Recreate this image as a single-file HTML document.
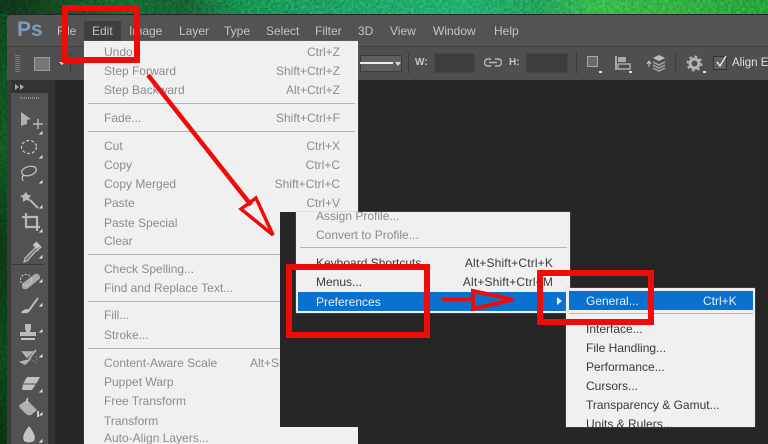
<!DOCTYPE html>
<html><head><meta charset="utf-8"><style>
html,body{margin:0;padding:0;background:#262626}
#r{position:relative;width:768px;height:444px;overflow:hidden;font-family:"Liberation Sans",sans-serif;font-size:12px;background:#262626;filter:blur(.3px)}
.a{position:absolute}
.t{position:absolute;line-height:16px;height:16px;white-space:nowrap}
.m{color:#c4c4c4;font-size:12px;top:23px}
.g{color:#8c8c8c;left:104px}
.k{color:#8c8c8c;right:428px}
.s{position:absolute;height:1px;background:#b4b4b4}
.d{color:#3a3a3a}
.q{letter-spacing:.15px}
</style></head><body><div id="r">
<div class="a" style="left:0;top:0;width:768px;height:15px;background:linear-gradient(90deg,#0b2a12 0,#123f1c 8%,#0f5a2a 16%,#14512a 24%,#127a45 32%,#1a8a55 45%,#1c9a5c 60%,#1c8a4c 70%,#2fa83e 78%,#2a9a38 88%,#1f8a30 100%)"></div>
<div class="a" style="left:0;top:14px;width:7px;height:430px;background:linear-gradient(180deg,#0d3a18,#0f4a1c 30%,#0a2e12 55%,#0c3c16 80%,#082a10)"></div>
<svg class="a" style="left:0;top:0;mix-blend-mode:overlay" width="768" height="444"><filter id="n"><feTurbulence type="fractalNoise" baseFrequency=".35" numOctaves="2" seed="4"/><feColorMatrix values="0 0 0 0 .5 0 0 0 0 .5 0 0 0 0 .5 1.600 0 0 0 -.3"/></filter><rect width="768" height="15" filter="url(#n)"/><rect y="14" width="7" height="430" filter="url(#n)"/></svg>

<div class="a" style="left:7px;top:14px;width:761px;height:430px;background:#262626;border-radius:3px 0 0 0"></div>
<div class="a" style="left:7px;top:15px;width:761px;height:31px;background:#535353;border-radius:3px 0 0 0"></div>
<div class="a" style="left:7px;top:46px;width:761px;height:34px;background:#4f4f4f;border-top:1px solid #3e3e3e;box-sizing:border-box"></div>
<div class="a" style="left:7px;top:80px;width:4px;height:364px;background:#3c3c3c"></div>
<div class="a" style="left:48px;top:80px;width:7px;height:364px;background:#333"></div>
<div class="a" style="left:11px;top:80px;width:37px;height:13px;background:#333"></div>
<div class="a" style="left:11px;top:93px;width:37px;height:351px;background:#525252"></div>

<div class="t" style="left:17px;top:18px;font-size:21px;line-height:24px;height:24px;font-weight:bold;color:#7d9dc0">Ps</div>
<div class="a" style="left:84px;top:21px;width:37px;height:20px;background:#3f3f3f"></div>
<div class="t m" style="left:57px">File</div>
<div class="t m" style="left:92px">Edit</div>
<div class="t m" style="left:129px">Image</div>
<div class="t m" style="left:179px">Layer</div>
<div class="t m" style="left:224px">Type</div>
<div class="t m" style="left:266px">Select</div>
<div class="t m" style="left:315px">Filter</div>
<div class="t m" style="left:358px">3D</div>
<div class="t m" style="left:390px">View</div>
<div class="t m" style="left:433px">Window</div>
<div class="t m" style="left:494px">Help</div>

<!-- options bar -->
<div class="a" style="left:15px;top:55px;width:5px;height:17px;background:repeating-linear-gradient(180deg,#777 0 1px,#4f4f4f 1px 2px)"></div>
<div class="a" style="left:34px;top:57px;width:14px;height:12px;background:#777;border:1px solid #9a9a9a"></div>
<div class="a" style="left:59px;top:62px;border:3px solid transparent;border-top:3px solid #ddd"></div>
<div class="a" style="left:70px;top:53px;width:1px;height:21px;background:#3e3e3e"></div>
<div class="a" style="left:360px;top:55px;width:42px;height:17px;background:#5e5e5e;border:1px solid #3c3c3c;box-sizing:border-box"></div>
<div class="a" style="left:360px;top:62px;width:33px;height:2px;background:#eee"></div>
<div class="a" style="left:395px;top:62px;border:3px solid transparent;border-top:4px solid #ddd"></div>
<div class="a" style="left:408px;top:53px;width:1px;height:21px;background:#3e3e3e"></div>
<div class="t" style="left:415px;top:55px;font-weight:bold;font-size:10px;color:#c8c8c8">W:</div>
<div class="a" style="left:434px;top:53px;width:41px;height:20px;background:#3d3d3d;border:1px solid #454545;box-sizing:border-box"></div>
<svg class="a" style="left:484px;top:56px" width="18" height="14" viewBox="0 0 18 14"><path d="M7 3H4a3.500 3.500 0 0 0 0 7h3M11 3h3a3.500 3.500 0 0 1 0 7h-3M5 6.500h8" fill="none" stroke="#b8b8b8" stroke-width="1.500"/></svg>
<div class="t" style="left:509px;top:55px;font-weight:bold;font-size:10px;color:#c8c8c8">H:</div>
<div class="a" style="left:526px;top:53px;width:42px;height:20px;background:#3d3d3d;border:1px solid #454545;box-sizing:border-box"></div>
<div class="a" style="left:576px;top:52px;width:1px;height:22px;background:#3e3e3e"></div>
<div class="a" style="left:587px;top:56px;width:9px;height:9px;background:#6a6a6a;border:1px solid #a8a8a8"></div>
<div class="a" style="left:599px;top:71px;width:3px;height:2px;background:#ddd"></div>
<svg class="a" style="left:615px;top:55px" width="22" height="18" viewBox="0 0 22 18"><path d="M1 1v14" stroke="#aaa" stroke-width="2"/><rect x="3" y="2" width="8" height="5" fill="#aaa"/><rect x="3" y="9" width="12" height="5" fill="none" stroke="#aaa" stroke-width="1.500"/></svg>
<div class="a" style="left:629px;top:71px;width:3px;height:2px;background:#ddd"></div>
<svg class="a" style="left:645px;top:54px" width="24" height="20" viewBox="0 0 24 20"><path d="M14 1l6 3-6 3-6-3z" fill="#bbb"/><path d="M8 8l6 3 6-3M8 11l6 3 6-3M8 14l6 3 6-3" fill="none" stroke="#a5a5a5" stroke-width="1.500"/><path d="M4 13V8M2 10l2-3 2 3" fill="none" stroke="#ccc"/></svg>
<div class="a" style="left:675px;top:52px;width:1px;height:22px;background:#3e3e3e"></div>
<svg class="a" style="left:686px;top:55px" width="17" height="17" viewBox="0 0 17 17"><circle cx="8.500" cy="8.500" r="4.500" fill="none" stroke="#b5b5b5" stroke-width="3"/><circle cx="8.500" cy="8.500" r="7" fill="none" stroke="#b5b5b5" stroke-width="2" stroke-dasharray="2.500 3"/></svg>
<div class="a" style="left:703px;top:71px;width:3px;height:2px;background:#ddd"></div>
<div class="a" style="left:713px;top:56px;width:12px;height:12px;background:#5e5e5e;border:1px solid #333"></div>
<svg class="a" style="left:714px;top:54px" width="15" height="15" viewBox="0 0 15 15"><path d="M3 8l3 4 6-10" fill="none" stroke="#ddd" stroke-width="1.500"/></svg>
<div class="t" style="left:732px;top:55px;font-size:11.500px;color:#e0e0e0">Align Edges</div>

<!-- toolbar -->
<div class="a" style="left:15px;top:84px;border:3px solid transparent;border-left:4px solid #aaa"></div>
<div class="a" style="left:20px;top:84px;border:3px solid transparent;border-left:4px solid #aaa"></div>
<div class="a" style="left:20px;top:97px;width:19px;height:2px;background:repeating-linear-gradient(90deg,#888 0 1px,#525252 1px 2px)"></div>
<div class="a" style="left:11px;top:264px;width:33px;height:1px;background:#3c3c3c"></div>
<svg class="a" style="left:11px;top:100px" width="37" height="344" viewBox="0 0 37 344" fill="none">
<path d="M10 12l10 7-4 1 0 4-6 2z" fill="#b0b0b0"/><path d="M27 19v10M22 24h10" stroke="#c8c8c8" stroke-width="1.200"/>
<ellipse cx="18" cy="47" rx="7.500" ry="6.500" stroke="#c4c4c4" stroke-width="1.300" stroke-dasharray="3 2"/>
<ellipse cx="18" cy="71" rx="7.500" ry="4.500" stroke="#c0c0c0" stroke-width="1.300" transform="rotate(-15 18 71)"/><path d="M13 75q-3 2-1 6" stroke="#c0c0c0" stroke-width="1.300"/>
<path d="M15 92l2 3 3 0-2 3 1 3-4-1-3 2 0-4-3-2 3-1z" fill="#b8b8b8"/><path d="M19 100l8 8" stroke="#b8b8b8" stroke-width="2"/>
<path d="M11 117h15v14M15 113v14h14" stroke="#b8b8b8" stroke-width="2.200"/>
<path d="M27 144l3 3-4 4-1 0-9 10-3 1 1-4 9-9z" stroke="#bbb" stroke-width="1.200" fill="#777"/><rect x="23" y="143" width="6" height="5" fill="#c4c4c4" transform="rotate(45 26 145)"/>
<g transform="translate(0 7)"><path d="M12 176l12-9q4-1 5 3q0 2-2 3l-11 9q-4 1-5-2q0-2 1-4z" fill="#aaa"/><circle cx="15" cy="173" r="5.500" stroke="#ccc" stroke-dasharray="2 1.500"/></g>
<path d="M27 198l-8 11q-2 2-5 2" stroke="#bbb" stroke-width="2"/><path d="M10 213q2-4 6-4l3 2q-2 3-9 2z" fill="#c0c0c0"/>
<path d="M14 224h6v4l-1 4h6v4H9v-4h6l-1-4z" fill="#bbb"/><rect x="10" y="238" width="14" height="2" fill="#c4c4c4"/>
<path d="M12 252h9l-5 5zM25 250l-7 9M10 262l8-2-4 4z" stroke="#b5b5b5" stroke-width="1.600" fill="#aaa"/><path d="M22 260l4 4M25 256l2 6" stroke="#999" stroke-dasharray="1.500 1.500"/>
<path d="M16 277h13l-4 7-4 6H11l1-6z" fill="#c0c0c0"/><path d="M11 284h14" stroke="#555"/>
<path d="M16 300l10 10-6 5q-3 1-6-2l-5-5q-2-3 1-4z" fill="#b0b0b0"/><path d="M17 298q-2 2 0 5" stroke="#ccc" stroke-width="1.500"/><path d="M27 311v6" stroke="#ccc" stroke-width="2"/>
<path d="M18 326q8 10 5 15q-5 3-10 0q-3-5 5-15z" fill="#c4c4c4"/>
<path d="M29 34l2-2v2zM29 58l2-2v2zM29 83l2-2v2zM29 108l2-2v2zM29 132l2-2v2zM29 158l2-2v2zM29 182l2-2v2zM29 206l2-2v2zM29 232l2-2v2zM29 257l2-2v2zM29 292l2-2v2zM29 315l2-2v2zM29 342l2-2v2z" stroke="#ddd"/>
</svg>

<!-- edit menu -->
<div class="a" style="left:84px;top:41px;width:274px;height:403px;background:#f0f0f0;box-shadow:0 0 1px #777"></div>
<div class="t g" style="top:44px">Undo</div><div class="t k" style="top:44px">Ctrl+Z</div>
<div class="t g" style="top:63px">Step Forward</div><div class="t k" style="top:63px">Shift+Ctrl+Z</div>
<div class="t g" style="top:82px">Step Backward</div><div class="t k" style="top:82px">Alt+Ctrl+Z</div>
<div class="s" style="left:88px;top:103px;width:267px"></div>
<div class="t g" style="top:110px">Fade...</div><div class="t k" style="top:110px">Shift+Ctrl+F</div>
<div class="s" style="left:88px;top:131px;width:267px"></div>
<div class="t g" style="top:138px">Cut</div><div class="t k" style="top:138px">Ctrl+X</div>
<div class="t g" style="top:157px">Copy</div><div class="t k" style="top:157px">Ctrl+C</div>
<div class="t g" style="top:176px">Copy Merged</div><div class="t k" style="top:176px">Shift+Ctrl+C</div>
<div class="t g" style="top:195px">Paste</div><div class="t k" style="top:195px">Ctrl+V</div>
<div class="t g" style="top:215px">Paste Special</div>
<div class="t g" style="top:233px">Clear</div>
<div class="s" style="left:88px;top:254px;width:267px"></div>
<div class="t g" style="top:261px">Check Spelling...</div>
<div class="t g" style="top:280px">Find and Replace Text...</div>
<div class="s" style="left:88px;top:301px;width:267px"></div>
<div class="t g" style="top:307px">Fill...</div>
<div class="t g" style="top:327px">Stroke...</div>
<div class="s" style="left:88px;top:348px;width:267px"></div>
<div class="t g" style="top:355px">Content-Aware Scale</div><div class="t" style="top:355px;left:250px;color:#8c8c8c">Alt+Shift+Ctrl+C</div>
<div class="t g" style="top:374px">Puppet Warp</div>
<div class="t g" style="top:393px">Free Transform</div>
<div class="t g" style="top:413px">Transform</div>
<div class="t g" style="top:430px">Auto-Align Layers...</div>

<!-- dark cover -->
<div class="a" style="left:280px;top:212px;width:488px;height:215px;background:#262626"></div>
<div class="a" style="left:358px;top:427px;width:410px;height:17px;background:#262626"></div>

<!-- submenu 1 -->
<div class="a" style="left:296px;top:212px;width:274px;height:101px;background:#f0f0f0;box-shadow:0 0 1px #999"></div>
<div class="a" style="left:296px;top:212px;width:274px;height:20px;overflow:hidden"><div class="t g" style="left:20px;top:-4px">Assign Profile...</div></div>
<div class="t g" style="left:316px;top:227px">Convert to Profile...</div>
<div class="s" style="left:300px;top:247px;width:267px"></div>
<div class="t d" style="left:316px;top:255px">Keyboard Shortcuts...</div><div class="t d q" style="right:215px;top:255px">Alt+Shift+Ctrl+K</div>
<div class="t d" style="left:316px;top:274px">Menus...</div><div class="t d q" style="right:215px;top:274px">Alt+Shift+Ctrl+M</div>
<div class="a" style="left:298px;top:292px;width:268px;height:19px;background:#0a71cf"></div>
<div class="t" style="left:316px;top:294px;color:#e8f0fa">Preferences</div>
<div class="a" style="left:557px;top:297px;border:4px solid transparent;border-left:5px solid #e8f0fa"></div>

<!-- submenu 2 -->
<div class="a" style="left:566px;top:288px;width:189px;height:139px;background:#f0f0f0;box-shadow:0 0 1px #999"></div>
<div class="a" style="left:569px;top:291px;width:184px;height:19px;background:#0a71cf"></div>
<div class="t" style="left:586px;top:293px;color:#e8f0fa">General...</div>
<div class="t" style="left:703px;top:293px;color:#e8f0fa">Ctrl+K</div>
<div class="s" style="left:569px;top:313px;width:184px"></div>
<div class="t d" style="left:586px;top:321px">Interface...</div>
<div class="t d" style="left:586px;top:340px">File Handling...</div>
<div class="t d" style="left:586px;top:359px">Performance...</div>
<div class="t d" style="left:586px;top:378px">Cursors...</div>
<div class="t d" style="left:586px;top:397px">Transparency &amp; Gamut...</div>
<div class="a" style="left:566px;top:416px;width:189px;height:11px;overflow:hidden"><div class="t d" style="left:20px;top:0">Units &amp; Rulers...</div></div>

<!-- red annotations -->
<svg class="a" style="left:0;top:0" width="768" height="444" fill="none" stroke="#f00a0a">
<rect x="65" y="8" width="72" height="52" stroke-width="6"/>
<rect x="289" y="267" width="138" height="68" stroke-width="6"/>
<rect x="540" y="273" width="111" height="49" stroke-width="6"/>
<path d="M148 75L251 205" stroke-width="4.500"/>
<path d="M241 209L256 198L273 235Z" stroke-width="3.500" stroke-linejoin="miter"/>
<path d="M441 299.500H471" stroke-width="4"/>
<path d="M473 291V309L513 299.500Z" stroke-width="4"/>
</svg>
</div></body></html>
